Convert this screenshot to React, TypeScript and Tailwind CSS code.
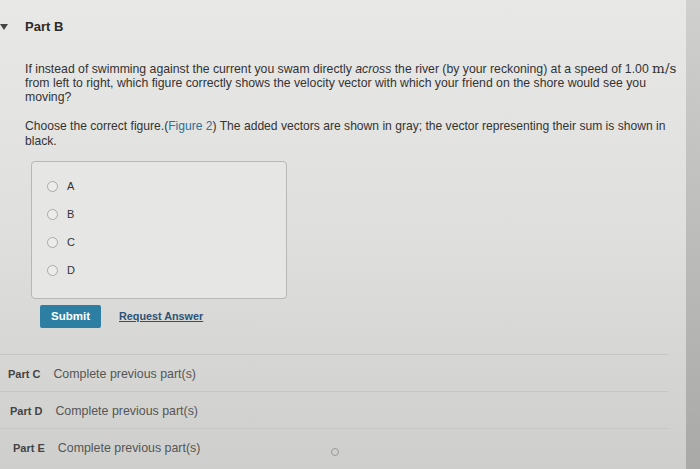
const choices = ['A', 'B', 'C', 'D']

const laterParts = [
  { name: 'Part C', indent: 'pl-[8px]' },
  { name: 'Part D', indent: 'pl-[10px]' },
  { name: 'Part E', indent: 'pl-[13px]' },
]

export default function App() {
  return (
    <div
      className="relative flex h-[469px] w-[700px] overflow-hidden bg-linear-to-b from-[#e8e8e6] via-[#dfdfdd] to-[#cecfcc] text-[#333]"
      style={{ fontFamily: '"Liberation Sans", Arial, sans-serif' }}
    >
      <div className="flex flex-1 flex-col">
        {/* header */}
        <div className="flex h-[50px] items-center gap-[17px] pt-[4px]">
          <svg width="8" height="6" viewBox="0 0 8 6">
            <path d="M0 0 L8 0 L4 6 Z" fill="#444" />
          </svg>
          <span className="text-[13px] font-bold text-[#2a2a2a]">Part B</span>
        </div>

        <div className="pl-[25px]">
          <p className="mt-[11px] whitespace-nowrap text-[12.25px] leading-[14px]">
            If instead of swimming against the current you swam directly <em>across</em> the river (by your
            reckoning) at a speed of 1.00{' '}
            <span className="text-[13.5px]" style={{ fontFamily: '"DejaVu Serif", serif' }}>
              m/s
            </span>
            <br />
            from left to right, which figure correctly shows the velocity vector with which your friend on the shore
            would see you
            <br />
            moving?
          </p>

          <p className="mt-[15px] whitespace-nowrap text-[12.1px] leading-[15px]">
            Choose the correct figure.(<span className="text-[#2f6f98]">Figure 2</span>) The added vectors are shown
            in gray; the vector representing their sum is shown in
            <br />
            black.
          </p>

          <div className="ml-[6px] mt-[12px] h-[138px] w-[256px] rounded-[4px] border border-[#b7b7b5] bg-[#e6e6e4] pt-[10px]">
            {choices.map((c) => (
              <div key={c} className="flex h-[28px] items-center gap-[9px] pl-[15px]">
                <span className="h-[11px] w-[11px] rounded-full border border-[#aaa] bg-[#ececea]" />
                <span className="text-[11px] text-[#333]">{c}</span>
              </div>
            ))}
          </div>

          <div className="mt-[6px] flex items-center gap-[18px] pl-[15px]">
            <button className="h-[23px] w-[61px] rounded-[2px] bg-[#2c7fa2] text-[11.5px] font-bold text-white">
              Submit
            </button>
            <span className="text-[10.8px] font-bold text-[#2d5275] underline">Request Answer</span>
          </div>
        </div>

        <div className="mr-[18px] mt-[26px]">
          {laterParts.map((p) => (
            <div
              key={p.name}
              className={`flex h-[37px] items-center gap-[13px] border-t border-[#c6c6c4] pt-[2px] ${p.indent}`}
            >
              <span className="text-[11px] font-bold text-[#444]">{p.name}</span>
              <span className="text-[12.4px] text-[#555]">Complete previous part(s)</span>
            </div>
          ))}
        </div>
      </div>

      {/* small loading ring */}
      <span className="absolute left-[331px] top-[448px] h-[8px] w-[8px] rounded-full border-[1.5px] border-[#999]" />

      {/* bezel strip at the right edge */}
      <div className="w-[14px] bg-linear-to-b from-[#d0d0ce] to-[#a9a9a7]" />
    </div>
  )
}
